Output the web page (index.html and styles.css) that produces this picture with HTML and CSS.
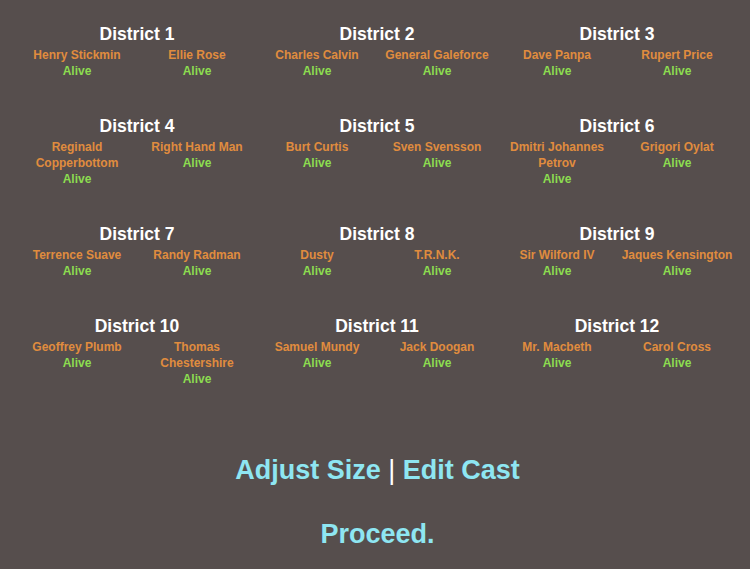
FILE: index.html
```html
<!DOCTYPE html>
<html lang="en">
<head>
    <meta charset="UTF-8">
    <meta name="viewport" content="width=device-width, initial-scale=1.0">
    <title>Reaping</title>
    <link rel="stylesheet" href="styles.css">
</head>
<body>
    <div class="districts">
        <div class="district">
            <div class="district-name">District 1</div>
            <div class="tributes">
                <div class="tribute"><div class="name">Henry Stickmin</div><div class="status">Alive</div></div>
                <div class="tribute"><div class="name">Ellie Rose</div><div class="status">Alive</div></div>
            </div>
        </div>
        <div class="district">
            <div class="district-name">District 2</div>
            <div class="tributes">
                <div class="tribute"><div class="name">Charles Calvin</div><div class="status">Alive</div></div>
                <div class="tribute"><div class="name">General Galeforce</div><div class="status">Alive</div></div>
            </div>
        </div>
        <div class="district">
            <div class="district-name">District 3</div>
            <div class="tributes">
                <div class="tribute"><div class="name">Dave Panpa</div><div class="status">Alive</div></div>
                <div class="tribute"><div class="name">Rupert Price</div><div class="status">Alive</div></div>
            </div>
        </div>

        <div class="district">
            <div class="district-name">District 4</div>
            <div class="tributes">
                <div class="tribute"><div class="name">Reginald Copperbottom</div><div class="status">Alive</div></div>
                <div class="tribute"><div class="name">Right Hand Man</div><div class="status">Alive</div></div>
            </div>
        </div>
        <div class="district">
            <div class="district-name">District 5</div>
            <div class="tributes">
                <div class="tribute"><div class="name">Burt Curtis</div><div class="status">Alive</div></div>
                <div class="tribute"><div class="name">Sven Svensson</div><div class="status">Alive</div></div>
            </div>
        </div>
        <div class="district">
            <div class="district-name">District 6</div>
            <div class="tributes">
                <div class="tribute"><div class="name">Dmitri Johannes Petrov</div><div class="status">Alive</div></div>
                <div class="tribute"><div class="name">Grigori Oylat</div><div class="status">Alive</div></div>
            </div>
        </div>

        <div class="district">
            <div class="district-name">District 7</div>
            <div class="tributes">
                <div class="tribute"><div class="name">Terrence Suave</div><div class="status">Alive</div></div>
                <div class="tribute"><div class="name">Randy Radman</div><div class="status">Alive</div></div>
            </div>
        </div>
        <div class="district">
            <div class="district-name">District 8</div>
            <div class="tributes">
                <div class="tribute"><div class="name">Dusty</div><div class="status">Alive</div></div>
                <div class="tribute"><div class="name">T.R.N.K.</div><div class="status">Alive</div></div>
            </div>
        </div>
        <div class="district">
            <div class="district-name">District 9</div>
            <div class="tributes">
                <div class="tribute"><div class="name">Sir Wilford IV</div><div class="status">Alive</div></div>
                <div class="tribute"><div class="name">Jaques Kensington</div><div class="status">Alive</div></div>
            </div>
        </div>

        <div class="district">
            <div class="district-name">District 10</div>
            <div class="tributes">
                <div class="tribute"><div class="name">Geoffrey Plumb</div><div class="status">Alive</div></div>
                <div class="tribute"><div class="name">Thomas Chestershire</div><div class="status">Alive</div></div>
            </div>
        </div>
        <div class="district">
            <div class="district-name">District 11</div>
            <div class="tributes">
                <div class="tribute"><div class="name">Samuel Mundy</div><div class="status">Alive</div></div>
                <div class="tribute"><div class="name">Jack Doogan</div><div class="status">Alive</div></div>
            </div>
        </div>
        <div class="district">
            <div class="district-name">District 12</div>
            <div class="tributes">
                <div class="tribute"><div class="name">Mr. Macbeth</div><div class="status">Alive</div></div>
                <div class="tribute"><div class="name">Carol Cross</div><div class="status">Alive</div></div>
            </div>
        </div>
    </div>

    <div class="actions">
        <a href="#" class="link">Adjust Size</a> <span class="sep">|</span> <a href="#" class="link">Edit Cast</a>
    </div>
    <div class="proceed">
        <a href="#" class="link">Proceed.</a>
    </div>
</body>
</html>
```

FILE: styles.css
```css
body {
    margin: 0;
    padding-top: 24px;
    background-color: #564e4d;
    font-family: "Liberation Sans", Arial, sans-serif;
    font-weight: bold;
}

.districts {
    display: grid;
    grid-template-columns: repeat(3, 240px);
    row-gap: 37px;
    margin-left: 17px;
}

.district-name {
    color: #ffffff;
    font-size: 17.5px;
    line-height: 20px;
    text-align: center;
    margin-bottom: 3px;
}

.tributes {
    display: grid;
    grid-template-columns: 120px 120px;
}

.tribute {
    text-align: center;
    font-size: 12px;
    line-height: 16px;
}

.name {
    color: #e08c3e;
}

.status {
    color: #8cdc50;
}

.actions {
    margin-top: 68px;
    padding-left: 5px;
    text-align: center;
    font-size: 27px;
    line-height: 30px;
}

.proceed {
    margin-top: 34px;
    padding-left: 5px;
    text-align: center;
    font-size: 27px;
    line-height: 30px;
}

.link {
    color: #8ee6f2;
    text-decoration: none;
}

.sep {
    color: #ffffff;
    font-weight: normal;
}
```
